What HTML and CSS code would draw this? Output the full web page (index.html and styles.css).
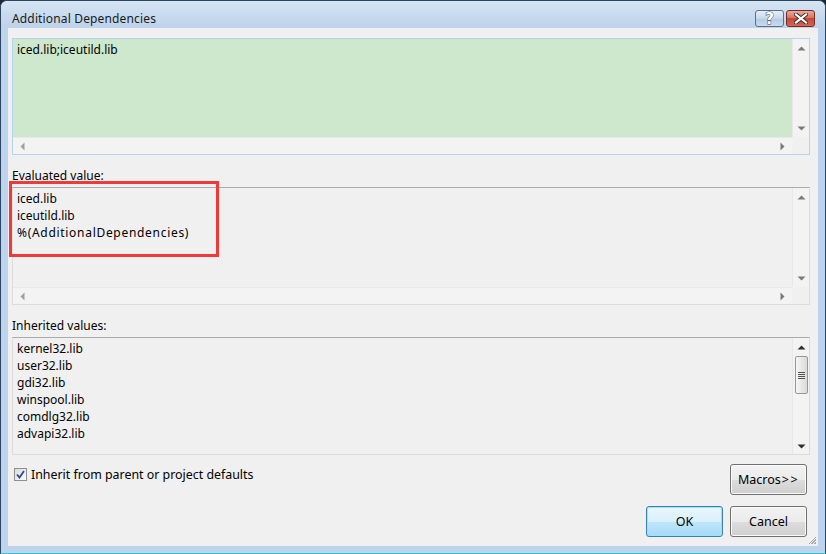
FILE: index.html
```html
<!DOCTYPE html>
<html lang="en">
<head>
<meta charset="UTF-8">
<title>Additional Dependencies</title>
<link rel="stylesheet" href="styles.css">
</head>
<body>
<div class="window">
    <div class="titlebar">
        <span class="title">Additional Dependencies</span>
        <div class="capbuttons">
            <span class="capbtn help">?</span>
            <span class="capbtn close">
                <svg width="14" height="11" viewBox="0 0 14 11">
                    <path d="M2 1.5 L12 9.5 M12 1.5 L2 9.5" stroke="#3b2a2a" stroke-width="4" stroke-linecap="square"/>
                    <path d="M2 1.5 L12 9.5 M12 1.5 L2 9.5" stroke="#fff" stroke-width="2.2" stroke-linecap="square"/>
                </svg>
            </span>
        </div>
    </div>

    <div class="client">
        <div class="editbox focused green">
            <div class="text">iced.lib;iceutild.lib</div>
            <div class="vscroll">
                <svg class="arrow" width="9" height="5" viewBox="0 0 9 5"><polygon points="0.5,4.5 4.5,0.5 8.5,4.5" fill="#7a7a7a"/></svg>
                <svg class="arrow" width="9" height="5" viewBox="0 0 9 5"><polygon points="0.5,0.5 4.5,4.5 8.5,0.5" fill="#7a7a7a"/></svg>
            </div>
            <div class="hscroll">
                <svg class="arrow" width="5" height="9" viewBox="0 0 5 9"><polygon points="4.5,0.5 0.5,4.5 4.5,8.5" fill="#a0a0a0"/></svg>
                <svg class="arrow" width="5" height="9" viewBox="0 0 5 9"><polygon points="0.5,0.5 4.5,4.5 0.5,8.5" fill="#7a7a7a"/></svg>
            </div>
            <div class="corner"></div>
        </div>

        <div class="label first">Evaluated value:</div>
        <div class="editbox readonly">
            <div class="text">iced.lib<br>iceutild.lib<br><span class="wide">%(AdditionalDependencies)</span></div>
            <div class="vscroll">
                <svg class="arrow" width="9" height="5" viewBox="0 0 9 5"><polygon points="0.5,4.5 4.5,0.5 8.5,4.5" fill="#7a7a7a"/></svg>
                <svg class="arrow" width="9" height="5" viewBox="0 0 9 5"><polygon points="0.5,0.5 4.5,4.5 8.5,0.5" fill="#7a7a7a"/></svg>
            </div>
            <div class="hscroll">
                <svg class="arrow" width="5" height="9" viewBox="0 0 5 9"><polygon points="4.5,0.5 0.5,4.5 4.5,8.5" fill="#a0a0a0"/></svg>
                <svg class="arrow" width="5" height="9" viewBox="0 0 5 9"><polygon points="0.5,0.5 4.5,4.5 0.5,8.5" fill="#7a7a7a"/></svg>
            </div>
            <div class="corner"></div>
        </div>

        <div class="label">Inherited values:</div>
        <div class="editbox readonly list">
            <div class="text">kernel32.lib<br>user32.lib<br>gdi32.lib<br>winspool.lib<br>comdlg32.lib<br>advapi32.lib</div>
            <div class="vscroll">
                <svg class="arrow" width="9" height="5" viewBox="0 0 9 5"><polygon points="0.5,4.5 4.5,0.5 8.5,4.5" fill="#303030"/></svg>
                <div class="thumb"><span></span><span></span><span></span><span></span></div>
                <div class="track"></div>
                <svg class="arrow" width="9" height="5" viewBox="0 0 9 5"><polygon points="0.5,0.5 4.5,4.5 8.5,0.5" fill="#303030"/></svg>
            </div>
        </div>

        <div class="optrow">
            <label class="check">
                <span class="box">
                    <svg width="9" height="9" viewBox="0 0 9 9"><path d="M1 4.5 L3.5 7.5 L8 1" stroke="#2b4d8c" stroke-width="1.8" fill="none"/></svg>
                </span>
                Inherit from parent or project defaults
            </label>
            <button class="btn">Macros<span class="gt">&gt;&gt;</span></button>
        </div>

        <div class="btnrow">
            <button class="btn default">OK</button>
            <button class="btn">Cancel</button>
        </div>

        <div class="grip"></div>
        <div class="redmark"></div>
    </div>
</div>
</body>
</html>
```

FILE: styles.css
```css
body {
    margin:0px;padding:0px;background-color:#1b2a3a;
    font-family: "Noto Sans", "Open Sans", sans-serif;
    font-size:12px;color:#000;
}

.window {
    width:826px;height:554px;
    box-sizing:border-box;
    display:flex;flex-direction:column;
    background:#bed4ec;
    border:1px solid #2d4560;
    border-bottom-color:#2cc6d6;
    border-radius:7px 7px 0 0;
    padding:0px 7px 7px 7px;
}

/* title bar */
.titlebar {
    height:27px;
    display:flex;align-items:flex-start;
    background:linear-gradient(#d7e5f3, #c6d9ee 60%, #bdd3ec);
    margin:0px -7px;padding:0px 10px 0px 11px;
    border-radius:6px 6px 0 0;
}
.title {
    margin-top:9px;
    font-size:12px;line-height:17px;color:#1a1a1a;
    letter-spacing:0.15px;
}
.capbuttons {
    margin-left:auto;margin-top:9px;
    display:flex;gap:2px;
}
.capbtn {
    width:29px;height:17px;
    box-sizing:border-box;
    display:flex;align-items:center;justify-content:center;
    border:1px solid #5a6f88;
    border-radius:3px;
}
.help {
    background:linear-gradient(#e6eef8, #c8d8ea 50%, #b3c9e2 51%, #c9dcef);
    color:#fff;font-weight:bold;font-size:15px;
    font-family:"DejaVu Sans", sans-serif;
    -webkit-text-stroke:1px #44546a;
    paint-order:stroke fill;
}
.close {
    border-color:#7a2a24;
    background:linear-gradient(#e9a99c, #d67566 45%, #c4483a 50%, #d6654f);
}

/* client area */
.client {
    flex:1;
    position:relative;
    background:#f0f0f0;
    display:flex;flex-direction:column;
    padding:10px 8px 0px 4px;
}

.editbox {
    display:grid;
    grid-template-columns:1fr 17px;
    grid-template-rows:1fr 17px;
    height:117px;
    box-sizing:border-box;
    border:1px solid #dcdcdc;
    border-top-color:#ababab;
    background:#f0f0f0;
}
.editbox.focused { border-color:#b5d3ee; }
.editbox.green .text { background:#cde8cd; }
.editbox.list { grid-template-rows:1fr; }

.text {
    padding:2px 4px;
    line-height:17px;
    white-space:nowrap;overflow:hidden;
}
.text .wide { letter-spacing:0.7px; }

.vscroll {
    display:flex;flex-direction:column;
    align-items:center;justify-content:space-between;
    background:#f3f3f3;
    border-left:1px solid #e8e8e8;
    padding:7px 0px 6px 0px;
}
.hscroll {
    display:flex;align-items:center;justify-content:space-between;
    background:#f3f3f3;
    border-top:1px solid #e8e8e8;
    padding:0px 7px 0px 7px;
}
.corner { background:#f0f0f0; }
.arrow { display:block; }

.list .vscroll { justify-content:flex-start;padding:7px 0px 5px 0px; }
.list .track { flex:1; }
.thumb {
    margin-top:6px;
    width:13px;height:38px;
    box-sizing:border-box;
    border:1px solid #979797;
    border-radius:2px;
    background:linear-gradient(90deg, #f6f6f6, #e8e8e8 50%, #dadada);
    display:flex;flex-direction:column;align-items:center;justify-content:center;gap:1px;
}
.thumb span { display:block;width:7px;height:1px;background:#555; }

.label {
    margin:13px 0px 3px 0px;
    line-height:16px;
}
.editbox.readonly { height:118px; }

/* bottom */
.optrow {
    margin-top:9px;
    display:flex;align-items:flex-start;justify-content:space-between;
    padding-right:3px;
}
.check {
    display:flex;align-items:center;gap:4px;
    margin-top:2px;margin-left:2px;
    line-height:17px;
    font-size:12.4px;
}
.check .box {
    width:13px;height:13px;
    box-sizing:border-box;
    border:1px solid #8e8f8f;
    background:linear-gradient(135deg, #dcdcdc, #fafafa);
    display:flex;align-items:center;justify-content:center;
}

.btn {
    width:77px;height:31px;
    font-family:"Noto Sans", "Open Sans", sans-serif;
    font-size:12.5px;color:#000;
    border:1px solid #707070;
    border-radius:3px;
    background:linear-gradient(#f2f2f2, #ebebeb 50%, #dddddd 51%, #cfcfcf);
    box-shadow:inset 0 0 0 1px #fbfbfb;
    padding:0px;
}
.btn .gt { letter-spacing:1.5px;margin-left:1px; }
.btn.default {
    border-color:#3c7fb1;
    background:linear-gradient(#eaf6fd, #d9f0fc 50%, #bee6fd 51%, #a7d9f5);
    box-shadow:inset 0 0 0 1px #98e4fa;
}
.btnrow {
    margin-top:11px;
    display:flex;justify-content:flex-end;gap:7px;
    padding-right:3px;
}

.grip {
    position:absolute;right:2px;bottom:2px;
    width:10px;height:10px;
    background:linear-gradient(135deg, transparent 60%, #a8a8a8 61%, #a8a8a8 66%, transparent 67%, transparent 74%, #a8a8a8 75%, #a8a8a8 80%, transparent 81%, transparent 88%, #a8a8a8 89%);
}

/* annotation drawn over the evaluated box */
.redmark {
    position:absolute;left:1px;top:153px;
    width:210px;height:76px;
    box-sizing:border-box;
    border:3px solid #f03a3a;
}
```
